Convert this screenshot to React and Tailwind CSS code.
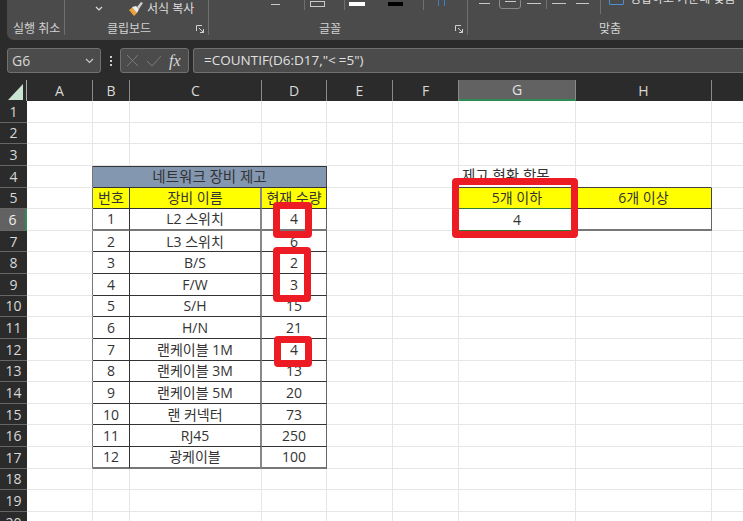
const FONT = "font-['Open_Sans','Noto_Sans_CJK_KR',sans-serif]";
const cols = ['A','B','C','D','E','F','G','H',''];

const rows = [
  ['1','L2 스위치','4'],['2','L3 스위치','6'],['3','B/S','2'],['4','F/W','3'],['5','S/H','15'],['6','H/N','21'],
  ['7','랜케이블 1M','4'],['8','랜케이블 3M','13'],['9','랜케이블 5M','20'],['10','랜 커넥터','73'],['11','RJ45','250'],['12','광케이블','100'],
];

function Cell({ children, className = 'border-r-[#e6e6e6] border-b-[#e6e6e6]' }) {
  return <div className={`flex items-center justify-center pt-[1px] min-w-0 whitespace-nowrap text-[14px] leading-none text-[#333] border-r border-b ${className}`}>{children}</div>;
}
const GRID = 'border-r-[#e6e6e6] border-b-[#e6e6e6]';
const Y = 'bg-[#ffff00]';

function rowCells(r) {
  const inTable = r >= 4 && r <= 17;
  const aBorder = inTable ? 'border-r-[#777] border-b-[#e6e6e6]' : GRID;
  const out = [<Cell key="a" className={aBorder} />];
  if (r === 4) {
    out.push(<Cell key="t" className="col-span-3 !text-[14.5px] bg-[#8497b0] border-t border-t-[#333] border-r-[#444] border-b-[#333]">네트워크 장비 제고</Cell>);
  } else if (r === 5) {
    out.push(<Cell key="b" className={`${Y} border-r-[#333] border-b-[#333]`}>번호</Cell>);
    out.push(<Cell key="c" className={`${Y} border-r-2 border-r-[#888] border-b-[#333]`}>장비 이름</Cell>);
    out.push(<Cell key="d" className={`${Y} border-r-[#444] border-b-[#333]`}>현재 수량</Cell>);
  } else if (inTable) {
    const d = rows[r - 6];
    const bottom = r === 6 || r === 17 ? 'border-b-2 border-b-[#777]' : 'border-b-[#333]';
    out.push(<Cell key="b" className={`border-r-[#333] ${bottom}`}>{d[0]}</Cell>);
    out.push(<Cell key="c" className={`border-r-2 border-r-[#888] ${bottom}`}>{d[1]}</Cell>);
    out.push(<Cell key="d" className={`border-r-[#666] ${bottom}`}>{d[2]}</Cell>);
  } else {
    out.push(<Cell key="b" />, <Cell key="c" />, <Cell key="d" />);
  }
  out.push(<Cell key="e" />, <Cell key="f" />);
  if (r === 4) {
    out.push(
      <div key="g" className="flex items-center pl-[3px] pt-[1px] whitespace-nowrap text-[14.5px] leading-none text-[#333] border-r border-r-[#e6e6e6] border-b border-b-[#444]">제고 현황 항목</div>,
      <Cell key="h" className="border-r-[#e6e6e6] border-b-[#444]" />,
    );
  } else if (r === 5) {
    out.push(
      <Cell key="g" className={`${Y} border-r-[#333] border-b-[#2e7d32]`}>5개 이하</Cell>,
      <Cell key="h" className={`${Y} border-r-[#444] border-b-[#333]`}>6개 이상</Cell>,
    );
  } else if (r === 6) {
    out.push(
      <Cell key="g" className="border-r-[#333] border-b-[#2e7d32]">4</Cell>,
      <Cell key="h" className="border-r-[#666] border-b-2 border-b-[#777]" />,
    );
  } else {
    out.push(<Cell key="g" />, <Cell key="h" />);
  }
  out.push(<Cell key="i" />);
  return out;
}

function RedBox({ className }) {
  return <div className={`absolute border-[7px] border-[#ed1c24] rounded-[4px] ${className}`} />;
}

function Launcher() {
  return (
    <svg width="9" height="9" viewBox="0 0 9 9" className="ml-auto mr-[3px]" fill="none" stroke="#d0d0d0" strokeWidth="1">
      <path d="M.5 6V.5H6M3 3l4.5 4.5M4 7.5h3.5V4" />
    </svg>
  );
}

function Group({ className, top, label, labelClass, launcher }) {
  return (
    <div className={`shrink-0 flex flex-col justify-end pb-[4px] ${className}`}>
      {top}
      <div className="h-[14px] flex items-center">
        <span className={`whitespace-nowrap text-[12px] leading-none text-[#d2d2d2] ${labelClass}`}>{label}</span>
        {launcher && <Launcher />}
      </div>
    </div>
  );
}

function Divider({ className = 'h-[9px]' }) {
  return <div className={`w-px shrink-0 bg-[#6f6f6f] ${className}`} />;
}

function Bars({ className, w = 'w-[11px]' }) {
  return <div className={`${w} h-[2px] shrink-0 border-b border-[#c8c8c8] ${className}`} />;
}

function GroupSep() {
  return <div className="w-px shrink-0 bg-[#6f6f6f] mb-[5px]" />;
}

export default function App() {
  return (
    <div className={`w-[743px] h-[521px] overflow-hidden bg-[#2b2b2b] ${FONT}`}>
      {/* ribbon */}
      <div className="h-[40px] bg-[#4b4b4b] rounded-bl-[7px] ml-[7px] flex overflow-hidden">
        <Group className="w-[57px]" label="실행 취소" labelClass="ml-[6px]" />
        <GroupSep />
        <Group
          className="w-[143px]"
          label="클립보드"
          labelClass="ml-[42px]"
          launcher
          top={
            <div className="h-[22px] flex items-start pt-[2px] pl-[30px]">
              <svg width="8" height="5" viewBox="0 0 8 5" className="mt-[4px] mr-[25px]" fill="none" stroke="#ddd" strokeWidth="1.2"><path d="M1 1l3 3 3-3" /></svg>
              <svg width="16" height="14" viewBox="0 0 16 14" className="mr-[3px]">
                <path d="M1 8l5 6 3-3-4-6z" fill="#e8a33c" />
                <path d="M4 5l5 6 2-4-3-3z" fill="#eee" />
                <path d="M9 5l4-5 2 1-4 6z" fill="#cfcfcf" />
              </svg>
              <span className="whitespace-nowrap text-[12px] leading-[14px] text-[#dedede]">서식 복사</span>
            </div>
          }
        />
        <GroupSep />
        <Group
          className="w-[258px]"
          label="글꼴"
          labelClass="ml-[110px]"
          launcher
          top={
            <div className="h-[22px] pb-[12px] flex items-end pl-[62px]">
              <Bars className="mb-[5px] mr-[24px]" w="w-[9px]" />
              <Divider className="h-[10px] mr-[5px]" />
              <div className="w-[15px] h-[6px] border border-[#c8c8c8] mr-[19px] mb-[3px]" />
              <Divider className="h-[10px] mr-[4px]" />
              <div className="w-[16px] h-[4px] bg-white mr-[23px] mb-[4px]" />
              <div className="w-[15px] h-[4px] bg-black mr-[20px] mb-[4px]" />
              <Divider className="h-[10px] mr-[14px]" />
              <div className="w-[7px] h-[6px] border-x border-[#3b7fc4] mb-[4px]" />
            </div>
          }
        />
        <GroupSep />
        <Group
          className="w-[275px]"
          label="맞춤"
          labelClass="ml-[131px]"
          top={
            <div className="h-[22px] pb-[13px] flex items-end pl-[11px]">
              <Bars className="mb-[5px] mr-[9px]" />
              <div className="w-[22px] h-[11px] shrink-0 border border-[#8a8a8a] rounded-[3px] flex justify-center mr-[6px]"><Bars className="mt-[1px]" w="w-[11px]" /></div>
              <Bars className="mb-[5px] mr-[5px]" w="w-[14px]" />
              <Divider className="h-[10px] mr-[5px]" />
              <Bars className="mb-[5px] mr-[10px]" w="w-[14px]" />
              <Bars className="mb-[5px] mr-[11px]" w="w-[13px]" />
              <Divider className="h-[19px] -mb-[5px] mr-[8px]" />
              <div className="w-[15px] h-[8px] shrink-0 border border-[#4a90d9] rounded-[1px] mb-[4px] mr-[6px]" />
              <span className="whitespace-nowrap text-[12px] leading-[14px] text-[#dedede] mb-[3px]">병합하고 가운데 맞춤</span>
            </div>
          }
        />
      </div>

      {/* formula bar */}
      <div className="mt-[8px] h-[26px] flex items-start pl-[7px] text-[#d6d6d6]">
        <div className="w-[94px] h-[25px] rounded-[3px] bg-[#4b4b4b] border border-[#707070] flex items-center justify-between pl-[4px] pr-[6px] text-[14px] leading-none">
          <span>G6</span>
          <svg width="9" height="6" viewBox="0 0 9 6" fill="none" stroke="#ccc" strokeWidth="1.1"><path d="M1 1l3.5 3.5L8 1" /></svg>
        </div>
        <div className="w-[19px] h-[25px] flex flex-col items-center justify-center gap-[2px]">
          <i className="w-[2px] h-[2px] bg-[#ccc]" /><i className="w-[2px] h-[2px] bg-[#ccc]" /><i className="w-[2px] h-[2px] bg-[#ccc]" />
        </div>
        <div className="w-[69px] h-[25px] rounded-[3px] bg-[#4b4b4b] border border-[#707070] flex items-center pl-[5px] gap-[7px] mr-[4px]">
          <svg width="13" height="13" viewBox="0 0 13 13" stroke="#7a7a7a" fill="none" strokeWidth="1"><path d="M1 1l11 11M12 1L1 12" /></svg>
          <svg width="16" height="12" viewBox="0 0 16 12" stroke="#7a7a7a" fill="none" strokeWidth="1"><path d="M1 6l5 5L15 1" /></svg>
          <span className="font-['Liberation_Serif',serif] italic text-[16px] text-[#d8d8d8] leading-none">fx</span>
        </div>
        <div className="flex-1 h-[25px] rounded-l-[3px] bg-[#4b4b4b] border border-r-0 border-[#707070] flex items-center pl-[10px] text-[13.5px] leading-none text-[#e0e0e0] whitespace-nowrap">=COUNTIF(D6:D17,"&lt;<span className="ml-[3px]">=5")</span></div>
      </div>

      {/* sheet */}
      <div className="relative mt-[6px] bg-white grid grid-cols-[27px_66px_37px_132px_65px_66px_66px_117px_136px_32px] grid-rows-[21px_repeat(20,21.64px)]">
        <div className="flex items-end justify-end pr-[2px] pb-[1px] bg-[#2b2b2b] border-r border-[#aaa]">
          <svg width="16" height="16" viewBox="0 0 16 16"><path d="M15 0v16H0z" fill="#c9e4d3" /></svg>
        </div>
        {cols.map((c, i) => (
          <div key={i} className={`flex items-center justify-center text-[14px] leading-none border-r border-[#8a8a8a] ${c === 'G' ? 'bg-[#626262] text-[#e4e4e4] border-b-2 border-b-[#2e8b57]' : 'bg-[#2b2b2b] text-[#d8d8d8]'}`}>{c}</div>
        ))}
        {Array.from({ length: 20 }, (_, idx) => {
          const r = idx + 1;
          return (
            <div key={r} className="contents">
              <div className={`flex items-center justify-center pt-[1px] text-[14px] leading-none border-b border-[#666] ${r === 6 ? 'bg-[#626262] text-[#eee] border-r-2 border-r-[#2e8b57]' : 'bg-[#2b2b2b] text-[#d8d8d8]'}`}>{r}</div>
              {rowCells(r)}
            </div>
          );
        })}
        <RedBox className="left-[273px] top-[122px] w-[39px] h-[36px]" />
        <RedBox className="left-[273px] top-[167px] w-[38px] h-[55px]" />
        <RedBox className="left-[274px] top-[256px] w-[38px] h-[31px]" />
        <RedBox className="left-[452px] top-[98px] w-[126px] h-[60px]" />
      </div>
    </div>
  );
}
